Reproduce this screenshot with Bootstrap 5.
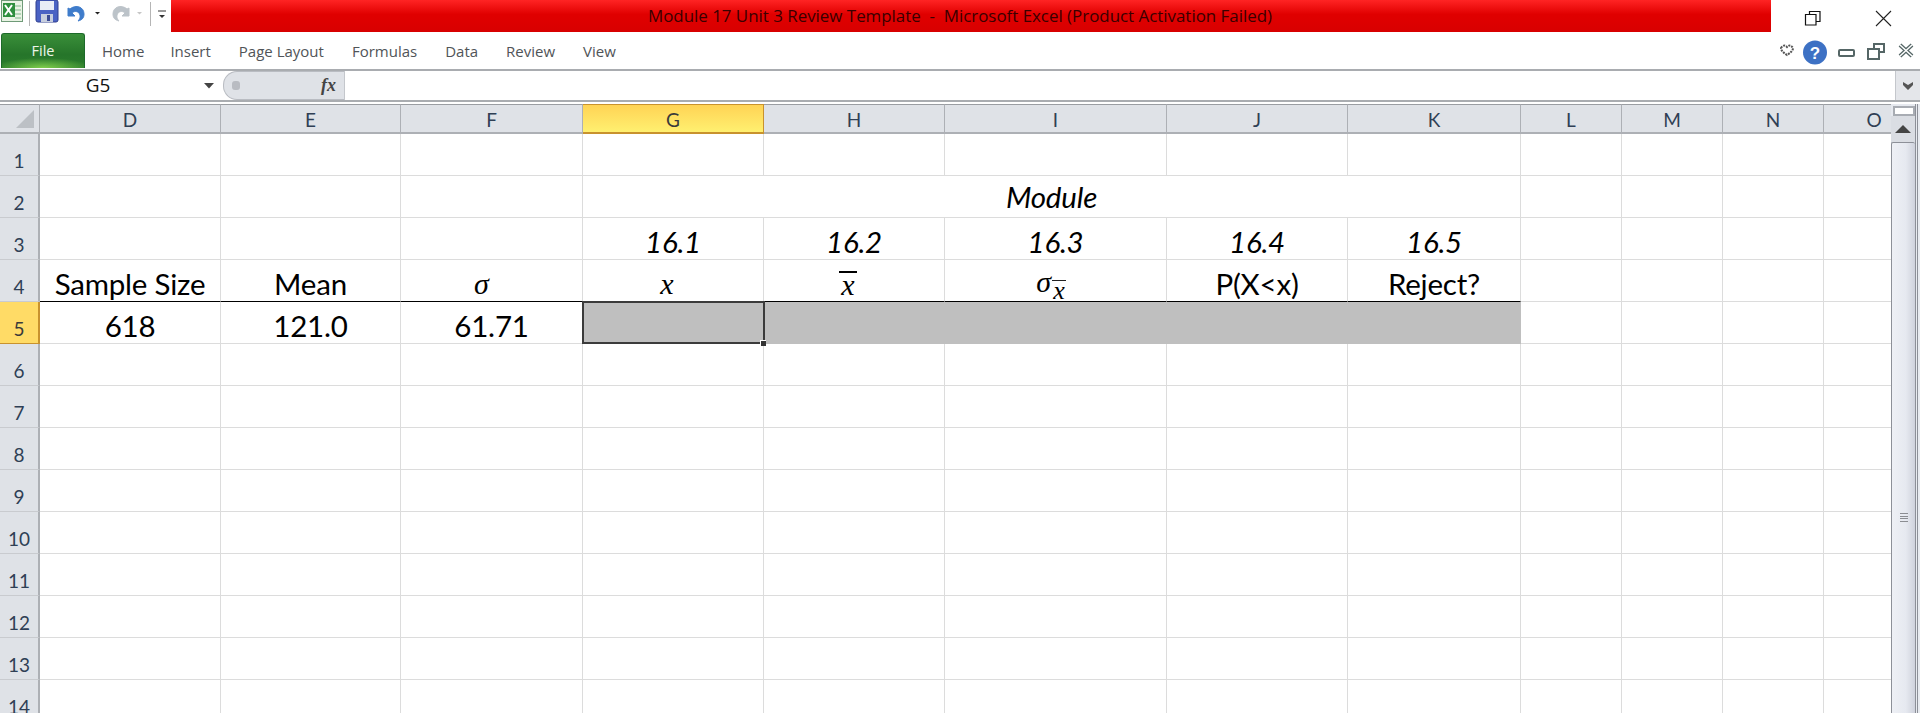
<!DOCTYPE html>
<html lang="en">
<head>
<meta charset="utf-8">
<title>Module 17 Unit 3 Review Template</title>
<link rel="stylesheet" href="https://cdn.jsdelivr.net/npm/bootstrap@5.3.0/dist/css/bootstrap.min.css">
<style>
html,body{height:713px;overflow:hidden;background:#fff;font-family:"Open Sans","Liberation Sans",sans-serif}
.xl-top{height:33px}
.xl-qat{width:171px;height:32px;flex:none}
.xl-title{width:1600px;height:32px;flex:none;background:linear-gradient(#ff2424,#e00000 45%,#d80000);color:#3a0000;font-size:16.9px;line-height:31px;text-align:center;padding-right:22px}
.xl-winbtns{flex:1;height:32px}
.xl-ribbon{height:38px;border-bottom:2px solid #a9acb0}
.xl-file{width:84px;height:35px;margin-left:1px;background:radial-gradient(ellipse 60% 30% at 50% 100%,#7fce4d 0,transparent 100%),linear-gradient(#3a8f3a,#26752a 60%,#2a7c2c);border:1px solid #1d6a2a;border-bottom:0;border-radius:3px 3px 0 0;color:#eef6ea;font-size:14.5px;line-height:34px;text-align:center}
.xl-tab{font-size:15px;color:#505458;line-height:37px}
.xl-tab:first-child{margin-right:-2px}
.xl-tabs{margin-left:17px;gap:28px}
.xl-fbar{height:31px;border-bottom:2px solid #a9acb0}
.xl-name{width:223px;font-size:19px;color:#111;line-height:29px}
.xl-name-t{width:196px;text-align:center}
.xl-name svg{margin-left:7px}
.xl-fnbox{width:121px;height:29px;background:#dfe2e7;border:1px solid #b9bcc2;border-right:0;border-radius:14px 0 0 14px}
.xl-fx{font-family:"Liberation Serif",serif;font-style:italic;font-weight:700;color:#444;font-size:18px;line-height:27px}
.xl-fin{flex:1;border-left:1px solid #c4c7cc}
.xl-drop{width:25px;height:29px;background:#e4e6ea;border-left:1px solid #c4c7cc}
.xl-gap{height:2px;background:#fff}
.xl-main{height:609px}
.xl-sheet{width:1891px;flex:none;overflow:hidden;height:609px}
.xl-grid{table-layout:fixed;border-collapse:separate;border-spacing:0;width:1925px;margin:0;font-family:Lato,"Liberation Sans",sans-serif}
.xl-grid th,.xl-grid td{padding:0;text-align:center;vertical-align:bottom;box-sizing:border-box;background:#fff;color:#000;font-weight:400;overflow:visible;white-space:nowrap}
.xl-grid td{height:42px;border-right:1px solid #dcdcdc;border-bottom:1px solid #dcdcdc;font-size:29.5px;line-height:34px;letter-spacing:-.2px}
.xl-grid thead th{height:30px;padding-top:3px;background:#dfe2e7;border-top:1px solid #9a9da2;border-right:1px solid #adb0b5;border-bottom:2px solid #adb0b5;font-size:19px;color:#2f3f55;vertical-align:middle;line-height:24px}
.xl-grid tbody th{background:#dfe2e7;border-right:2px solid #adb0b5;border-bottom:1px solid #c9cbcf;font-size:19px;color:#2f3f55;line-height:27px;padding-bottom:1px}
.xl-grid thead th.xl-corner{padding:0}
.xl-corner svg{display:block;margin-left:15px}
.xl-grid thead th.xl-act{background:linear-gradient(#ffd355,#fff070);color:#3a3a3a;border-color:#c8922e}
.xl-grid tbody th.xl-act{background:#ffdb66;color:#3a3a3a;border-color:#c8922e}
.xl-grid td.xl-it{font-style:italic}
.xl-grid td.xl-mod{line-height:36px;padding-bottom:2px}
.xl-grid td.xl-hd{border-bottom-color:#000}
.xl-grid td.xl-fill{background:#bfbfbf;border-right-color:#bfbfbf;border-bottom-color:#bfbfbf}
.xl-grid td.xl-cur{position:relative}
.xl-cursor{position:absolute;left:-1px;top:-1px;right:-2px;bottom:-1px;border:2px solid #3b3b3b}
.xl-handle{position:absolute;right:-3px;bottom:-3px;width:6px;height:6px;background:#333;border:1px solid #fff;border-width:1px 0 0 1px}
.xl-math{font-family:"Liberation Serif",serif;font-style:italic;font-size:30px;letter-spacing:0}
.xl-m1{margin-right:20px}
.xl-m2{margin-right:12px}
.xl-m3{margin-right:12px}
.xl-m4{margin-right:9px}
.xl-bar{border-top:2px solid #000;display:inline-block;line-height:24px;padding:0 2px}
.xl-sub{display:inline-block;border-top:1px solid #222;font-size:26px;line-height:20px;vertical-align:-7px;margin-left:1px;padding:0 1px}
.xl-scroll{width:29px;flex:none;background:#fff;overflow:hidden;height:609px}
.xl-vbar{width:24px;height:750px;background:#e6e9ef;flex:none}
.xl-split{height:10px;margin-top:2px;margin-left:2px;border:2px solid #a8acb3;background:#fff;width:22px;flex:none}
.xl-up{height:26px;background:#dadde3;flex:none}
.xl-thumb{height:750px;flex:none;background:linear-gradient(90deg,#eef0f5,#e6e9f0 60%,#cfd2dc);border:1px solid #8d9098;border-right:0;border-bottom:0;border-top-left-radius:2px;border-top-right-radius:2px}
.xl-edge{width:5px;height:100%;background:linear-gradient(90deg,#8d9098 0 1px,#e8ebf0 1px 2px,#8d9098 2px 3px,#e8ebf0 3px)}
.xl-grip{width:8px;height:9px;border-top:1px solid #8b8d92;border-bottom:1px solid #8b8d92;position:relative}
.xl-grip::after{content:"";position:absolute;left:0;right:0;top:2px;height:1px;background:#8b8d92;box-shadow:0 2px 0 #8b8d92}
</style>
</head>
<body>
<div class="d-flex xl-top">
  <div class="xl-qat d-flex align-items-center">
    <svg width="171" height="32" viewBox="0 0 171 32">
      <rect x="1.500" y="0.500" width="21" height="21" fill="#e9f3e4" stroke="#6f9a78"/>
      <rect x="3" y="3" width="12" height="14" fill="#2f8f3e"/>
      <path d="M5 5l7 10M12 5l-7 10" stroke="#fff" stroke-width="2"/>
      <path d="M15 6h6M15 10h6M15 14h6M15 18h6" stroke="#7fb98a"/>
      <path d="M29.500 1v25" stroke="#b5b5b5"/>
      <rect x="36" y="0" width="22" height="22" rx="2" fill="#4a62c4" stroke="#2f3f8f"/>
      <rect x="40" y="1" width="14" height="9" fill="#e8ecf6"/>
      <rect x="41" y="14" width="12" height="8" fill="#c7cede"/><rect x="47" y="15" width="3" height="6" fill="#3a4a94"/>
      <path d="M70 9c6-5 14-2 14 5 0 4-2 6-6 7 2-2 3-5 1-8-2-2-5-2-7 0l3 3h-7V8z" fill="#3f7ccb" stroke="#3f7ccb"/>
      <path d="M95 12l5 0-2.500 2.500z" fill="#222"/>
      <path d="M127 9c-6-5-14-2-14 5 0 4 2 6 6 7-2-2-3-5-1-8 2-2 5-2 7 0l-3 3h7V8z" fill="#bcc3c9" stroke="#bcc3c9"/>
      <path d="M137 12l5 0-2.500 2.500z" fill="#c6c6c6"/>
      <path d="M150.500 2v24" stroke="#b5b5b5"/>
      <path d="M158 11h8" stroke="#333"/><path d="M159 15h6l-3 3z" fill="#333"/>
    </svg>
  </div>
  <div class="xl-title">Module 17 Unit 3 Review Template&nbsp; -&nbsp; Microsoft Excel (Product Activation Failed)</div>
  <div class="xl-winbtns">
    <svg class="d-block" width="149" height="32" viewBox="0 0 149 32">
      <path d="M38.500 14.500v-3h10.500v10h-4M34.500 14.500h10.500v10.500h-10.500z" fill="none" stroke="#111" stroke-width="1.200"/>
      <path d="M105 11l15 15M120 11l-15 15" stroke="#222" stroke-width="1.100"/>
    </svg>
  </div>
</div>
<div class="d-flex xl-ribbon">
  <div class="xl-file">File</div>
  <div class="d-flex xl-tabs">
    <span class="xl-tab">Home</span><span class="xl-tab">Insert</span><span class="xl-tab">Page Layout</span><span class="xl-tab">Formulas</span><span class="xl-tab">Data</span><span class="xl-tab">Review</span><span class="xl-tab">View</span>
  </div>
  <div class="ms-auto">
    <svg class="d-block" width="140" height="36" viewBox="0 0 140 36">
      <path d="M1 15c2-3 4-3 6-1 2-2 4-2 6 1 0 3-3 5-6 7-3-2-6-4-6-7z" fill="#fff" stroke="#555" stroke-width="2" stroke-dasharray="2 1"/>
      <circle cx="35" cy="19.500" r="12" fill="#3d71c4"/><text x="35" y="25.500" font-family="Liberation Sans" font-weight="700" font-size="17" fill="#fff" text-anchor="middle">?</text>
      <rect x="59" y="17" width="15" height="6" rx="1" fill="#fff" stroke="#566" stroke-width="2"/>
      <rect x="94" y="11" width="10" height="8" fill="#fff" stroke="#566" stroke-width="2"/><rect x="88" y="16" width="11" height="10" fill="#fff" stroke="#566" stroke-width="2"/>
      <path d="M120 12l12 11M132 12l-12 11" stroke="#566" stroke-width="4"/><path d="M120 12l12 11M132 12l-12 11" stroke="#fff" stroke-width="1.500"/>
    </svg>
  </div>
</div>
<div class="d-flex xl-fbar">
  <div class="xl-name d-flex align-items-center">
    <span class="xl-name-t">G5</span>
    <svg width="12" height="8" viewBox="0 0 12 8"><path d="M1 1h10L6 6.500z" fill="#444"/></svg>
  </div>
  <div class="xl-fnbox d-flex align-items-center justify-content-between px-2">
    <svg width="8" height="10" viewBox="0 0 8 10"><rect width="8" height="9" rx="3" fill="#b9bcc2"/></svg>
    <span class="xl-fx">fx</span>
  </div>
  <div class="xl-fin"></div>
  <div class="xl-drop d-flex align-items-center justify-content-center">
    <svg width="12" height="10" viewBox="0 0 12 10"><path d="M1 1l5 3 5-3v3l-5 5-5-5z" fill="#555"/></svg>
  </div>
</div>
<div class="xl-gap"></div>
<div class="d-flex xl-main">
  <div class="xl-sheet">
    <table class="xl-grid">
      <colgroup>
        <col style="width:40px"><col style="width:181px"><col style="width:180px"><col style="width:182px"><col style="width:181px"><col style="width:181px"><col style="width:222px"><col style="width:181px"><col style="width:173px"><col style="width:101px"><col style="width:101px"><col style="width:101px"><col style="width:101px">
      </colgroup>
      <thead>
        <tr>
          <th class="xl-corner"><svg width="20" height="20" viewBox="0 0 20 20"><path d="M19 1v18H1z" fill="#bcc0c5"/></svg></th>
          <th>D</th><th>E</th><th>F</th><th class="xl-act">G</th><th>H</th><th>I</th><th>J</th><th>K</th><th>L</th><th>M</th><th>N</th><th>O</th>
        </tr>
      </thead>
      <tbody>
        <tr><th>1</th><td></td><td></td><td></td><td></td><td></td><td></td><td></td><td></td><td></td><td></td><td></td><td></td></tr>
        <tr><th>2</th><td></td><td></td><td></td><td colspan="5" class="xl-it xl-mod">Module</td><td></td><td></td><td></td><td></td></tr>
        <tr><th>3</th><td></td><td></td><td></td><td class="xl-it">16.1</td><td class="xl-it">16.2</td><td class="xl-it">16.3</td><td class="xl-it">16.4</td><td class="xl-it">16.5</td><td></td><td></td><td></td><td></td></tr>
        <tr><th>4</th><td class="xl-hd">Sample Size</td><td class="xl-hd">Mean</td><td class="xl-hd"><span class="xl-math xl-m1">σ</span></td><td class="xl-hd"><span class="xl-math xl-m2">x</span></td><td class="xl-hd"><span class="xl-math xl-bar xl-m3">x</span></td><td class="xl-hd"><span class="xl-math xl-m4">σ<span class="xl-sub">x</span></span></td><td class="xl-hd">P(X&lt;x)</td><td class="xl-hd">Reject?</td><td></td><td></td><td></td><td></td></tr>
        <tr><th class="xl-act">5</th><td>618</td><td>121.0</td><td>61.71</td><td class="xl-fill xl-cur"><span class="xl-cursor"></span><span class="xl-handle"></span></td><td class="xl-fill"></td><td class="xl-fill"></td><td class="xl-fill"></td><td class="xl-fill"></td><td></td><td></td><td></td><td></td></tr>
        <tr><th>6</th><td></td><td></td><td></td><td></td><td></td><td></td><td></td><td></td><td></td><td></td><td></td><td></td></tr>
        <tr><th>7</th><td></td><td></td><td></td><td></td><td></td><td></td><td></td><td></td><td></td><td></td><td></td><td></td></tr>
        <tr><th>8</th><td></td><td></td><td></td><td></td><td></td><td></td><td></td><td></td><td></td><td></td><td></td><td></td></tr>
        <tr><th>9</th><td></td><td></td><td></td><td></td><td></td><td></td><td></td><td></td><td></td><td></td><td></td><td></td></tr>
        <tr><th>10</th><td></td><td></td><td></td><td></td><td></td><td></td><td></td><td></td><td></td><td></td><td></td><td></td></tr>
        <tr><th>11</th><td></td><td></td><td></td><td></td><td></td><td></td><td></td><td></td><td></td><td></td><td></td><td></td></tr>
        <tr><th>12</th><td></td><td></td><td></td><td></td><td></td><td></td><td></td><td></td><td></td><td></td><td></td><td></td></tr>
        <tr><th>13</th><td></td><td></td><td></td><td></td><td></td><td></td><td></td><td></td><td></td><td></td><td></td><td></td></tr>
        <tr><th>14</th><td></td><td></td><td></td><td></td><td></td><td></td><td></td><td></td><td></td><td></td><td></td><td></td></tr>
      </tbody>
    </table>
  </div>
  <div class="xl-scroll d-flex">
    <div class="xl-vbar d-flex flex-column">
      <div class="xl-split"></div>
      <div class="xl-up d-flex align-items-center justify-content-center"><svg width="16" height="9" viewBox="0 0 16 9"><path d="M8 0l8 8H0z" fill="#444"/></svg></div>
      <div class="xl-thumb d-flex align-items-center justify-content-center"><span class="xl-grip"></span></div>
    </div>
    <div class="xl-edge"></div>
  </div>
</div>
<script src="https://cdn.jsdelivr.net/npm/bootstrap@5.3.0/dist/js/bootstrap.bundle.min.js"></script>
</body>
</html>
